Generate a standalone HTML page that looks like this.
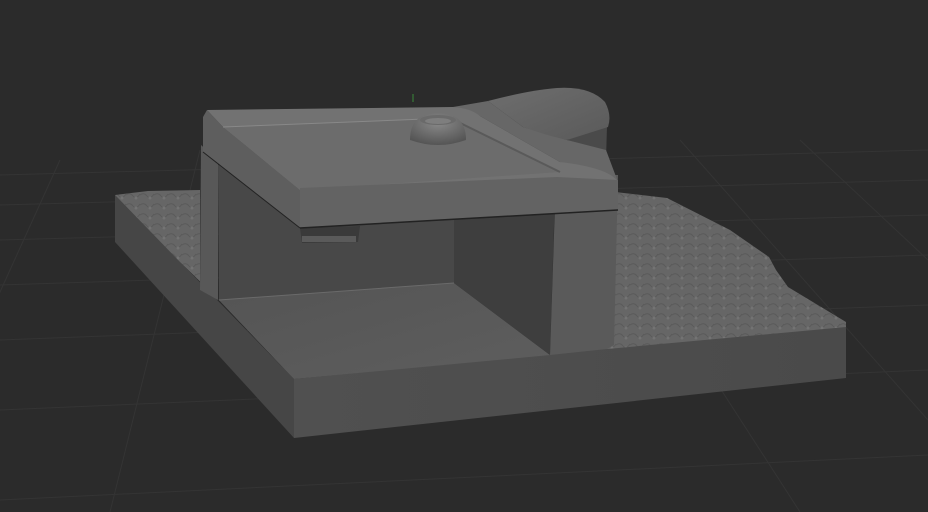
<!DOCTYPE html>
<html><head><meta charset="utf-8"><style>
html,body{margin:0;padding:0;background:#2a2a2a;width:928px;height:512px;overflow:hidden}
</style></head><body>
<svg width="928" height="512" viewBox="0 0 928 512" xmlns="http://www.w3.org/2000/svg">
<defs>
<linearGradient id="front" x1="0" y1="0" x2="1" y2="0"><stop offset="0" stop-color="#505050"/><stop offset="1" stop-color="#4a4a4a"/></linearGradient>
<linearGradient id="floor" x1="0" y1="0" x2="1" y2="1"><stop offset="0" stop-color="#545454"/><stop offset="1" stop-color="#5e5e5e"/></linearGradient>
<linearGradient id="hd" x1="0" y1="0" x2="1" y2="1"><stop offset="0" stop-color="#6e6e6e"/><stop offset="1" stop-color="#5a5a5a"/></linearGradient>
<radialGradient id="kn" cx="0.5" cy="0.3" r="0.7"><stop offset="0" stop-color="#8a8a8a"/><stop offset="1" stop-color="#555"/></radialGradient>
<pattern id="rock" width="14" height="10" patternUnits="userSpaceOnUse">
<rect width="14" height="10" fill="#666"/>
<path d="M0,5 Q4,2 7,6 T14,4" stroke="#5a5a5a" stroke-width="1" fill="none"/>
<circle cx="10" cy="8" r="1.5" fill="#737373"/>
</pattern>
</defs>
<rect width="928" height="512" fill="#2b2b2b"/>
<g stroke="#343434" stroke-width="1" fill="none">
<line x1="0" y1="175" x2="928" y2="150"/><line x1="0" y1="205" x2="928" y2="180"/>
<line x1="0" y1="240" x2="928" y2="215"/><line x1="0" y1="285" x2="928" y2="255"/>
<line x1="0" y1="340" x2="928" y2="305"/><line x1="0" y1="410" x2="928" y2="370"/>
<line x1="0" y1="500" x2="928" y2="455"/>
<line x1="60" y1="160" x2="-100" y2="512"/><line x1="200" y1="150" x2="110" y2="512"/>
<line x1="680" y1="140" x2="928" y2="420"/><line x1="800" y1="140" x2="928" y2="260"/>
<line x1="560" y1="140" x2="800" y2="512"/>
</g>
<polygon points="115,195 294,379 294,438 115,242" fill="#464646"/>
<polygon points="115,195 148,191 200,190 200,282 219,300 294,379 250,330 180,262" fill="url(#rock)"/>
<polygon points="294,379 846,325 846,378 294,438" fill="url(#front)"/>
<polygon points="615,192 667,198 730,230 769,257 776,270 788,287 846,322 846,327 607,349" fill="url(#rock)"/>
<polygon points="219,300 454,283 550,355 294,379" fill="url(#floor)"/>
<polygon points="218,165 454,160 454,283 219,300" fill="#484848"/>
<polygon points="454,160 556,160 550,355 454,283" fill="#3e3e3e"/>
<line x1="219" y1="300" x2="454" y2="283" stroke="#6a6a6a"/>
<polygon points="300,228 360,226 358,242 302,243" fill="#3a3a3a"/>
<rect x="302" y="236" width="54" height="6" fill="#5a5a5a"/>
<polygon points="556,175 618,175 614,345 607,349 550,355" fill="#5a5a5a"/>
<polygon points="201,145 218,160 218,300 200,290" fill="#585858"/>
<!-- handle -->
<polygon points="568,138 607,126 606,160 570,158" fill="#4a4a4a"/>
<path d="M453,107 L488,101 L523,127 L567,140 L606,150 L618,182 L560,162 L480,116 Z" fill="#676767"/>
<path d="M488,101 Q530,90 557,88 Q590,86 605,102 Q612,115 608,127 L567,140 Q545,135 523,127 Z" fill="url(#hd)"/>
<polygon points="203,117 207,110 223,127 300,190 300,228 203,152" fill="#5e5e5e"/>
<path d="M207,110 L453,107 Q470,108 480,116 L560,162 Q610,168 618,182 L300,190 L223,127 Z" fill="#727272"/>
<polygon points="223,127 450,118 560,172 300,190" fill="#6c6c6c"/>
<line x1="223" y1="127" x2="450" y2="118" stroke="#888" stroke-width="1"/>
<line x1="450" y1="118" x2="560" y2="172" stroke="#5a5a5a" stroke-width="2"/>
<polygon points="300,188 557,177 618,180 618,210 300,228" fill="#636363"/>
<line x1="300" y1="228" x2="618" y2="210" stroke="#222" stroke-width="1.5"/>
<line x1="203" y1="152" x2="300" y2="228" stroke="#222" stroke-width="1"/>
<path d="M410,140 Q410,113 438,113 Q466,113 466,140 Q438,150 410,140 Z" fill="url(#kn)"/>
<ellipse cx="438" cy="120" rx="18" ry="5" fill="#6a6a6a"/>
<ellipse cx="438" cy="121" rx="13" ry="3" fill="#7e7e7e"/>
<line x1="413" y1="94" x2="413" y2="102" stroke="#3a8a3a"/>
</svg>
</body></html>
